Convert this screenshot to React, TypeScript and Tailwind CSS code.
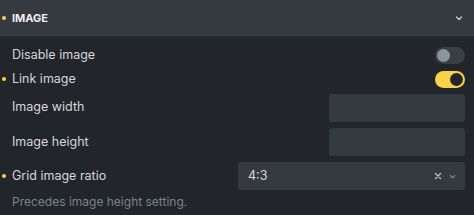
import React from 'react';

function Dot() {
  return <span className="absolute left-[2px] top-1/2 -translate-y-1/2 w-[4px] h-[4px] rounded-full bg-[#f7d347]" />;
}

function Toggle({ on }: { on: boolean }) {
  return (
    <div className={`w-[30px] h-[17px] rounded-full flex items-center px-[2px] ${on ? 'bg-[#f7d347] justify-end' : 'bg-[#3a3f46] justify-start'}`}>
      <div className={`w-[13px] h-[13px] rounded-full ${on ? 'bg-[#23262a]' : 'bg-[#8e949c]'}`} />
    </div>
  );
}

function Row({ label, dot, children, h }: { label: string; dot?: boolean; children?: React.ReactNode; h: string }) {
  return (
    <div className={`relative flex items-center justify-between pl-[12px] pr-[9px] ${h}`}>
      {dot && <Dot />}
      <span className="text-[12.5px] text-[#d4d7db]">{label}</span>
      {children}
    </div>
  );
}

export default function App() {
  return (
    <div className="w-[474px] h-[215px] bg-[#222529] overflow-hidden" style={{ fontFamily: 'Inter, "Noto Sans", sans-serif' }}>
      <div className="relative h-[37px] bg-[#353a41] flex items-center justify-between pl-[12px] pr-[9px] border-b border-[#2b2f34]">
        <Dot />
        <span className="text-[11px] font-bold text-[#eef0f2]">IMAGE</span>
        <svg width="10" height="10" viewBox="0 0 10 10" className="mr-[1px]">
          <path d="M2.5 4 L5 6.5 L7.5 4" stroke="#c9ccd0" strokeWidth="1.3" fill="none" strokeLinecap="round" strokeLinejoin="round" />
        </svg>
      </div>
      <div className="pt-[5px]">
        <Row label="Disable image" h="h-[26px]"><Toggle on={false} /></Row>
        <Row label="Link image" dot h="h-[22px]"><Toggle on /></Row>
        <div className="h-[3px]" />
        <Row label="Image width" h="h-[29px]">
          <div className="w-[136px] h-[28px] rounded-[3px] bg-[#353a41]" />
        </Row>
        <div className="h-[6px]" />
        <Row label="Image height" h="h-[28px]">
          <div className="w-[136px] h-[28px] rounded-[3px] bg-[#353a41]" />
        </Row>
        <div className="h-[6px]" />
        <Row label="Grid image ratio" dot h="h-[28px]">
          <div className="w-[227px] h-[28px] rounded-[3px] bg-[#353a41] flex items-center justify-between pl-[10px] pr-[8px]">
            <span className="text-[12.5px] text-[#d4d7db]">4:3</span>
            <div className="flex items-center gap-[6px]">
              <svg width="8" height="8" viewBox="0 0 8 8">
                <path d="M1.5 1.5 L6.5 6.5 M6.5 1.5 L1.5 6.5" stroke="#b9bdc2" strokeWidth="1.4" strokeLinecap="round" />
              </svg>
              <svg width="9" height="9" viewBox="0 0 10 10">
                <path d="M2.5 4 L5 6.5 L7.5 4" stroke="#8e939a" strokeWidth="1.2" fill="none" strokeLinecap="round" strokeLinejoin="round" />
              </svg>
            </div>
          </div>
        </Row>
        <div className="pl-[12px] pt-[3px] text-[12px] text-[#7d8288]">Precedes image height setting.</div>
      </div>
    </div>
  );
}
